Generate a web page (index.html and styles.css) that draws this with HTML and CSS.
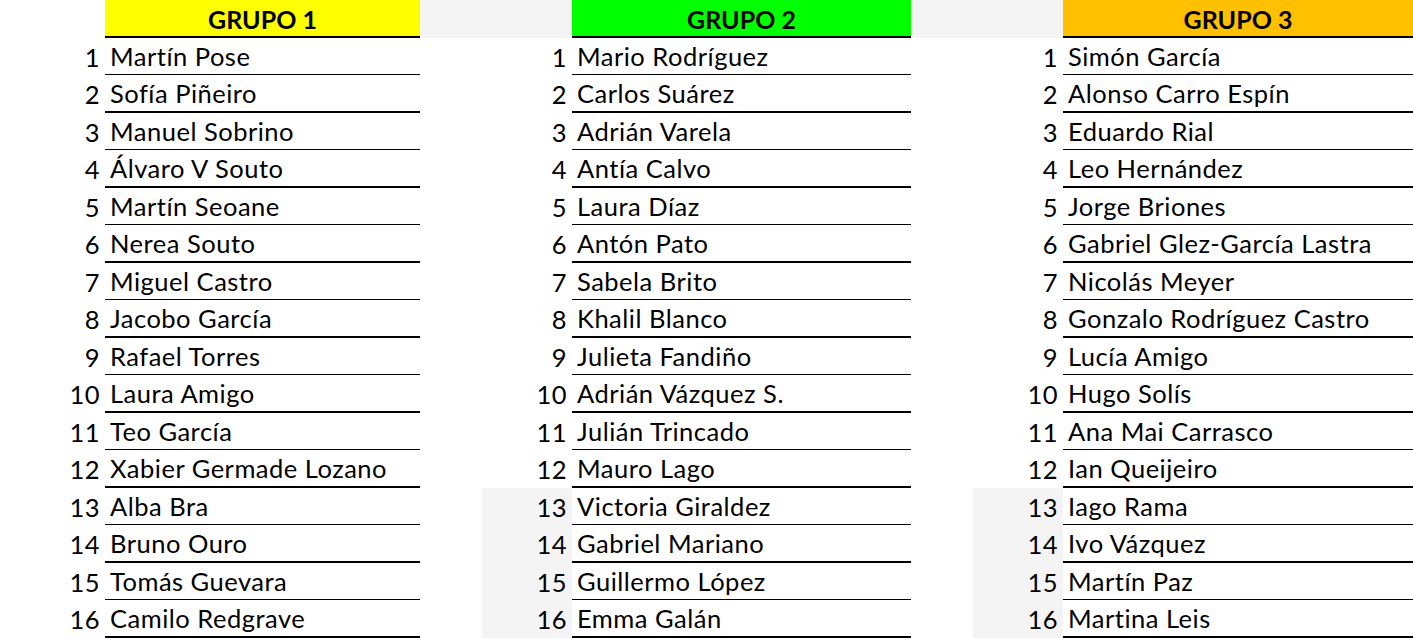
FILE: index.html
```html
<!DOCTYPE html>
<html lang="es">
<head>
<meta charset="utf-8">
<title>Grupos</title>
<link rel="stylesheet" href="styles.css">
</head>
<body>
<div class="sheet">
  <section class="group g1">
    <div class="row head"><div class="num"></div><div class="name">GRUPO 1</div></div>
    <div class="row"><div class="num">1</div><div class="name">Martín Pose</div></div>
    <div class="row"><div class="num">2</div><div class="name">Sofía Piñeiro</div></div>
    <div class="row"><div class="num">3</div><div class="name">Manuel Sobrino</div></div>
    <div class="row"><div class="num">4</div><div class="name">Álvaro V Souto</div></div>
    <div class="row"><div class="num">5</div><div class="name">Martín Seoane</div></div>
    <div class="row"><div class="num">6</div><div class="name">Nerea Souto</div></div>
    <div class="row"><div class="num">7</div><div class="name">Miguel Castro</div></div>
    <div class="row"><div class="num">8</div><div class="name">Jacobo García</div></div>
    <div class="row"><div class="num">9</div><div class="name">Rafael Torres</div></div>
    <div class="row"><div class="num">10</div><div class="name">Laura Amigo</div></div>
    <div class="row"><div class="num">11</div><div class="name">Teo García</div></div>
    <div class="row"><div class="num">12</div><div class="name">Xabier Germade Lozano</div></div>
    <div class="row"><div class="num">13</div><div class="name">Alba Bra</div></div>
    <div class="row"><div class="num">14</div><div class="name">Bruno Ouro</div></div>
    <div class="row"><div class="num">15</div><div class="name">Tomás Guevara</div></div>
    <div class="row"><div class="num">16</div><div class="name">Camilo Redgrave</div></div>
  </section>
  <section class="group g2">
    <div class="row head"><div class="num"></div><div class="name">GRUPO 2</div></div>
    <div class="row"><div class="num">1</div><div class="name">Mario Rodríguez</div></div>
    <div class="row"><div class="num">2</div><div class="name">Carlos Suárez</div></div>
    <div class="row"><div class="num">3</div><div class="name">Adrián Varela</div></div>
    <div class="row"><div class="num">4</div><div class="name">Antía Calvo</div></div>
    <div class="row"><div class="num">5</div><div class="name">Laura Díaz</div></div>
    <div class="row"><div class="num">6</div><div class="name">Antón Pato</div></div>
    <div class="row"><div class="num">7</div><div class="name">Sabela Brito</div></div>
    <div class="row"><div class="num">8</div><div class="name">Khalil Blanco</div></div>
    <div class="row"><div class="num">9</div><div class="name">Julieta Fandiño</div></div>
    <div class="row"><div class="num">10</div><div class="name">Adrián Vázquez S.</div></div>
    <div class="row"><div class="num">11</div><div class="name">Julián Trincado</div></div>
    <div class="row"><div class="num">12</div><div class="name">Mauro Lago</div></div>
    <div class="row shade"><div class="num">13</div><div class="name">Victoria Giraldez</div></div>
    <div class="row shade"><div class="num">14</div><div class="name">Gabriel Mariano</div></div>
    <div class="row shade"><div class="num">15</div><div class="name">Guillermo López</div></div>
    <div class="row shade"><div class="num">16</div><div class="name">Emma Galán</div></div>
  </section>
  <section class="group g3">
    <div class="row head"><div class="num"></div><div class="name">GRUPO 3</div></div>
    <div class="row"><div class="num">1</div><div class="name">Simón García</div></div>
    <div class="row"><div class="num">2</div><div class="name">Alonso Carro Espín</div></div>
    <div class="row"><div class="num">3</div><div class="name">Eduardo Rial</div></div>
    <div class="row"><div class="num">4</div><div class="name">Leo Hernández</div></div>
    <div class="row"><div class="num">5</div><div class="name">Jorge Briones</div></div>
    <div class="row"><div class="num">6</div><div class="name">Gabriel Glez-García Lastra</div></div>
    <div class="row"><div class="num">7</div><div class="name">Nicolás Meyer</div></div>
    <div class="row"><div class="num">8</div><div class="name">Gonzalo Rodríguez Castro</div></div>
    <div class="row"><div class="num">9</div><div class="name">Lucía Amigo</div></div>
    <div class="row"><div class="num">10</div><div class="name">Hugo Solís</div></div>
    <div class="row"><div class="num">11</div><div class="name">Ana Mai Carrasco</div></div>
    <div class="row"><div class="num">12</div><div class="name">Ian Queijeiro</div></div>
    <div class="row shade"><div class="num">13</div><div class="name">Iago Rama</div></div>
    <div class="row shade"><div class="num">14</div><div class="name">Ivo Vázquez</div></div>
    <div class="row shade"><div class="num">15</div><div class="name">Martín Paz</div></div>
    <div class="row shade"><div class="num">16</div><div class="name">Martina Leis</div></div>
  </section>
</div>
</body>
</html>
```
FILE: styles.css
```css
* { box-sizing: border-box; }
html, body { margin: 0; padding: 0; background: #ffffff; }
body {
  font-family: Lato, "Open Sans", sans-serif;
  font-size: 25.5px;
  color: #000;
  width: 1413px;
  height: 639px;
  overflow: hidden;
}
.sheet { display: flex; }
.group { display: flex; flex-direction: column; }
.g1 { width: 420px; }
.g2 { width: 491px; }
.g3 { width: 502px; }
.g1 .num { width: 105px; }
.g2 .num, .g3 .num { width: 152px; }

.row { display: flex; height: 37px; }
.row:nth-child(2n+3) { height: 38px; }
.row .num {
  flex: none;
  display: flex;
  align-items: center;
  justify-content: flex-end;
  padding-right: 5px;
  padding-top: 2px;
  line-height: 1;
  letter-spacing: 0.5px;
}
.row .name {
  flex: 1;
  display: flex;
  align-items: center;
  padding-left: 5px;
  padding-top: 2px;
  border-bottom: 1px solid #000;
  line-height: 1;
  white-space: nowrap;
  letter-spacing: 0.5px;
}
.row:nth-child(2n+3) .name { border-bottom-width: 2px; }

.head { height: 38px; }
.head .name {
  justify-content: center;
  padding-left: 0;
  padding-top: 3px;
  font-size: 25px;
  font-weight: 700;
  letter-spacing: 0;
  border-bottom: 2px solid #000;
}
.g1 .head .name { background: #ffff00; }
.g2 .head .name { background: #00ff00; }
.g3 .head .name { background: #ffc000; }
.g2 .head .num, .g3 .head .num { background: #f4f4f4; }
.shade .num { background: linear-gradient(to right, transparent 62px, #f4f4f4 62px); }
```
